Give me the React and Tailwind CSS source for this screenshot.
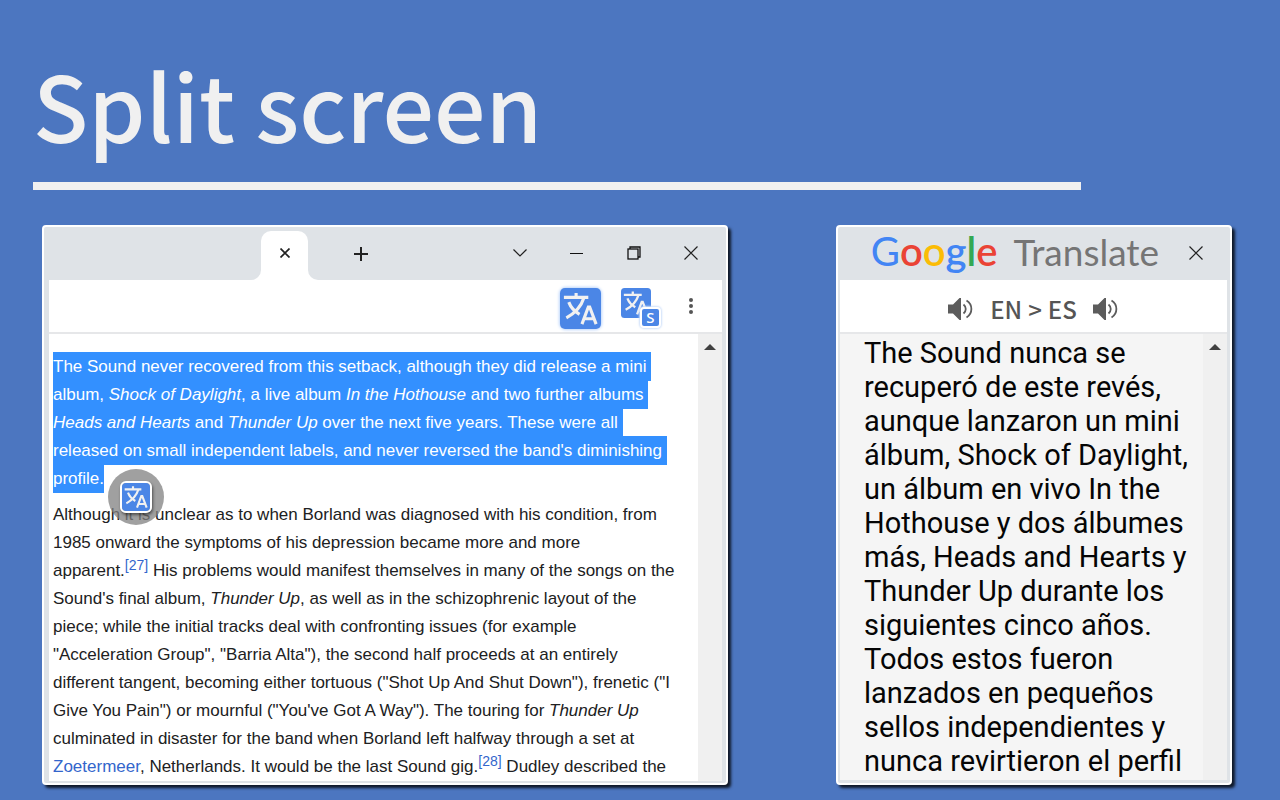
import React from 'react';
import clsx from 'clsx';

const TranslateIcon = ({ className }) => (
  <svg viewBox="0 0 42 42" className={className} aria-hidden="true">
    <rect width="42" height="42" rx="5" fill="#4b86e6" />
    <g fill="none" stroke="#f1f1f1" strokeWidth="3.2">
      <path d="M4 9.6h25M16.5 5v5" />
      <path d="M24.5 10C22 18 15 26 6.5 30.5" />
      <path d="M9 14.5C11 20 15 24 20 27" />
      <path d="M22.5 37L29 19.5h1.4L37 37M24.8 31.5h10" />
    </g>
  </svg>
);

const SpeakerIcon = () => (
  <svg viewBox="0 0 26 22" className="h-[22px] w-[26px]" aria-hidden="true">
    <path d="M0 6.5h5L11.5 0H13v22h-1.5L5 15.5H0z" fill="#5c5c5c" />
    <g fill="none" stroke="#5c5c5c" strokeWidth="1.8">
      <path d="M15.5 6.5C18.5 9 18.5 13 15.5 15.5" />
      <path d="M18.5 2.5C25 6.5 25 15.5 18.5 19.5" />
    </g>
  </svg>
);

const CloseIcon = ({ className }) => (
  <svg viewBox="0 0 14 14" className={className} fill="none" stroke="#222" aria-hidden="true">
    <path d="M.5 .5l13 13M13.5 .5l-13 13" strokeWidth="1.2" />
  </svg>
);

const WindowButton = ({ label, children }) => (
  <button type="button" aria-label={label} className="flex h-8 w-[57px] items-center justify-center">
    {children}
  </button>
);

const ScrollTrack = () => (
  <div className="flex w-6 shrink-0 justify-center bg-[#f0f0f0] pt-[10px]">
    <svg viewBox="0 0 12 6" className="h-[6px] w-3" aria-hidden="true">
      <path d="M6 0l6 6H0z" fill="#404040" />
    </svg>
  </div>
);

const Panel = ({ children }) => (
  <section
    className={clsx(
      'flex min-w-0 flex-col rounded border-2 border-white bg-[#dfe3e7]',
      'shadow-[3px_3px_3px_rgba(0,0,0,0.8)]'
    )}
  >
    {children}
  </section>
);

const Cite = ({ n }) => (
  <sup className="relative -top-[6px] align-baseline text-[14px] leading-none">
    <a href="#cite" className="text-[#3366cc]">[{n}]</a>
  </sup>
);

const TabStrip = () => (
  <div className="flex h-[53px] items-end pl-[207px]">
    <div className="h-[10px] w-[10px] bg-white">
      <div className="h-full rounded-br-[10px] bg-[#dfe3e7]" />
    </div>
    <div className="flex h-[49px] w-[47px] items-center justify-center rounded-t-[10px] bg-white pb-[6px]">
      <button type="button" aria-label="Close tab">
        <svg viewBox="0 0 10 10" className="h-[10px] w-[10px]" stroke="#222" strokeWidth="1.7" aria-hidden="true">
          <path d="M.5 .5l9 9M9.5 .5l-9 9" />
        </svg>
      </button>
    </div>
    <div className="h-[10px] w-[10px] bg-white">
      <div className="h-full rounded-bl-[10px] bg-[#dfe3e7]" />
    </div>
    <button type="button" aria-label="New tab" className="mb-[19px] ml-9">
      <svg viewBox="0 0 14 14" className="h-[14px] w-[14px]" stroke="#222" strokeWidth="2" aria-hidden="true">
        <path d="M7 0v14M0 7h14" />
      </svg>
    </button>
    <div className="mb-[11px] ml-auto flex pr-[7px]">
      <WindowButton label="Search tabs">
        <svg viewBox="0 0 14 8" className="h-2 w-[14px]" fill="none" stroke="#222" strokeWidth="1.2" aria-hidden="true">
          <path d="M.5 .5L7 7l6.5-6.5" />
        </svg>
      </WindowButton>
      <WindowButton label="Minimize">
        <span className="h-px w-[13px] bg-[#111]" />
      </WindowButton>
      <WindowButton label="Restore">
        <svg viewBox="0 0 14 14" className="h-[14px] w-[14px]" fill="none" stroke="#111" strokeWidth="1.3" aria-hidden="true">
          <rect x="1" y="3" width="10" height="10" />
          <path d="M3 3V1h10v10h-2" />
        </svg>
      </WindowButton>
      <WindowButton label="Close">
        <CloseIcon className="h-[14px] w-[14px]" />
      </WindowButton>
    </div>
  </div>
);

const Toolbar = () => (
  <div className="flex h-[54px] items-center justify-end border-b-2 border-[#e6e7e9] bg-white pt-1 pr-[29px]">
    <button type="button" aria-label="Translate" className="mr-5 rounded-md shadow-[0_0_3px_1px_#bcd5fb]">
      <TranslateIcon className="h-[41px] w-[41px]" />
    </button>
    <button type="button" aria-label="Translate selection" className="relative mr-7 h-10 w-10">
      <TranslateIcon className="mb-[10px] h-[30px] w-[30px]" />
      <span className="absolute right-0 bottom-0 flex h-[21px] w-[21px] items-center justify-center rounded border-2 border-white bg-[#4b86e6] font-['Noto_Sans',sans-serif] text-[15px] leading-none font-medium text-white shadow-[0_0_2px_1px_#cfe0fa]">
        S
      </span>
    </button>
    <button type="button" aria-label="Menu" className="mb-1">
      <svg viewBox="0 0 4 16" className="h-4 w-1" fill="#555" aria-hidden="true">
        <circle cx="2" cy="2" r="2" />
        <circle cx="2" cy="8" r="2" />
        <circle cx="2" cy="14" r="2" />
      </svg>
    </button>
  </div>
);

const Article = () => (
  <article className="min-w-0 flex-1 bg-white pt-[19px] pr-5 pl-1 font-['Liberation_Sans',Arial,sans-serif] text-[17px] leading-7 text-[#202122]">
    <p className="mb-2 whitespace-pre-wrap text-white">
      <span className="bg-[#3390ff] py-[5px]">
        The Sound never recovered from this setback, although they did release a mini
        album, <i>Shock of Daylight</i>, a live album <i>In the Hothouse</i> and two further
        albums <i>Heads and Hearts</i> and <i>Thunder Up</i> over the next five years. These were all
        released on small independent labels, and never reversed the band's diminishing{' '}
        <span className="relative">
          profile.
          <button
            type="button"
            aria-label="Translate selected text"
            className="absolute top-0 left-full ml-1 flex h-14 w-14 items-center justify-center rounded-full bg-[#808080]/75"
          >
            <TranslateIcon className="h-8 w-8 rounded-md border-2 border-white shadow-[1px_2px_3px_rgba(0,0,0,0.5)]" />
          </button>
        </span>
      </span>
    </p>
    <p>
      Although it is unclear as to when Borland was diagnosed with his condition, from
      1985 onward the symptoms of his depression became more and
      more <span className="whitespace-nowrap">apparent.<Cite n={27} /></span> His problems would
      manifest themselves in many of the songs on the
      Sound's final album, <i>Thunder Up</i>, as well as in the schizophrenic layout of the
      piece; while the initial tracks deal with confronting issues (for example
      "Acceleration Group", "Barria Alta"), the second half proceeds at an entirely
      different tangent, becoming either tortuous ("Shot Up And Shut Down"), frenetic ("I
      Give You Pain") or mournful ("You've Got A Way"). The touring for <i>Thunder Up</i>{' '}
      culminated in disaster for the band when Borland left halfway through a set
      at <a href="#zoetermeer" className="text-[#3366cc]">Zoetermeer</a>, Netherlands. It would be
      the last Sound <span className="whitespace-nowrap">gig.<Cite n={28} /></span> Dudley described the
    </p>
  </article>
);

const GoogleTranslateLogo = () => (
  <h2 className="flex items-baseline gap-4 pb-1 font-['Lato',sans-serif] leading-none">
    <span className="text-[40px] font-semibold">
      <span className="font-normal text-[#4285f4]">G</span>
      <span className="text-[#ea4335]">o</span>
      <span className="text-[#fbbc05]">o</span>
      <span className="text-[#4285f4]">g</span>
      <span className="text-[#34a853]">l</span>
      <span className="text-[#ea4335]">e</span>
    </span>
    <span className="text-[37px] text-[#757575]">Translate</span>
  </h2>
);

const TranslationPanel = () => (
  <Panel>
    <div className="flex h-[53px] items-center justify-end pr-[27px] pb-[2px]">
      <GoogleTranslateLogo />
      <button type="button" aria-label="Close" className="ml-[30px]">
        <CloseIcon className="h-[14px] w-[14px]" />
      </button>
    </div>
    <div className="mr-[3px] ml-[2px] flex h-[54px] items-center justify-center gap-4 border-b-2 border-[#e6e7e9] bg-white pt-[6px]">
      <button type="button" aria-label="Listen to source">
        <SpeakerIcon />
      </button>
      <span className="flex gap-[6px] font-['Noto_Sans_CJK_KR',sans-serif] text-[24px] leading-[30px] font-medium text-[#555]">
        <span>EN</span>
        <span>&gt;</span>
        <span>ES</span>
      </span>
      <button type="button" aria-label="Listen to translation">
        <SpeakerIcon />
      </button>
    </div>
    <div className="mr-[3px] mb-[3px] ml-[2px] flex flex-1 bg-[#f5f5f5]">
      <p
        lang="es"
        className="min-w-0 flex-1 pt-[2px] pl-6 font-['Roboto',sans-serif] text-[29px] leading-[34px] text-[#050505]"
      >
        The Sound nunca se recuperó de este revés, aunque lanzaron un mini álbum, Shock of
        Daylight, un álbum en vivo In the Hothouse y dos álbumes más, Heads and Hearts y Thunder
        Up durante los siguientes cinco años. Todos estos fueron lanzados en pequeños sellos
        independientes y nunca revirtieron el perfil
      </p>
      <ScrollTrack />
    </div>
  </Panel>
);

const App = () => {
  return (
    <div className="min-h-screen overflow-hidden bg-[#4c76c0]">
      <header className="pt-[43px] pl-[33px]">
        <h1 className="font-['Noto_Sans_CJK_KR',sans-serif] text-[91px] leading-[120px] font-medium text-[#f0f0f0]">
          Split screen
        </h1>
        <div className="mt-[19px] mr-[199px] h-2 bg-[#f0f0f0]" />
      </header>

      <main className="grid grid-cols-[686fr_396fr] gap-[108px] pt-[35px] pr-12 pb-[14px] pl-[42px]">
        <Panel>
          <TabStrip />
          <div className="mr-1 mb-[2px] ml-[5px]">
            <Toolbar />
            <div className="flex">
              <Article />
              <ScrollTrack />
            </div>
          </div>
        </Panel>
        <TranslationPanel />
      </main>
    </div>
  );
};

export default App;
